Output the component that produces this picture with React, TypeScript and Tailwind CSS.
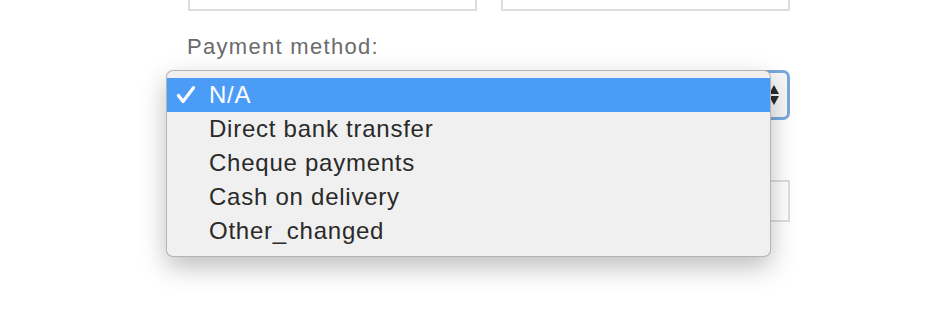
const options = ["N/A", "Direct bank transfer", "Cheque payments", "Cash on delivery", "Other_changed"];

function Check() {
  return (
    <svg width="20" height="18" viewBox="0 0 20 18" fill="none" className="block">
      <path d="M2.5 9.5 L7 15.5 L17.5 1.8" stroke="white" strokeWidth="3.2" strokeLinecap="round" strokeLinejoin="round" />
    </svg>
  );
}

export default function App() {
  const selected = "N/A";
  return (
    <div className="h-[324px] w-[934px] overflow-hidden bg-white font-['Liberation_Sans',Arial,sans-serif]">
      <div className="relative ml-[187px] w-[603px]">
        {/* inputs from the previous row, cut off by the top edge */}
        <div className="-mt-[31px] grid grid-cols-2 gap-[24px] pl-[1px]">
          <div className="h-[42px] border-2 border-[#dedede] bg-white" />
          <div className="h-[42px] border-2 border-[#dedede] bg-white" />
        </div>

        <label className="mt-[23px] block text-[22px] leading-[26px] tracking-[1.3px] text-[#6b6b6b]">
          Payment method:
        </label>

        <div className="relative mt-[10px]">
          <div className="flex h-[50px] items-center justify-end rounded-[7px] border-[3px] border-[#78a9de] bg-[#f7f7f7] pr-[8px]">
            <div className="flex flex-col items-center gap-[2px]">
              <span className="h-0 w-0 border-x-[5px] border-b-[9px] border-x-transparent border-b-[#2b2b2b]" />
              <span className="h-0 w-0 border-x-[5px] border-t-[9px] border-x-transparent border-t-[#2b2b2b]" />
            </div>
          </div>

          <ul className="absolute left-[-21px] top-0 w-[605px] rounded-[7px] border border-black/25 bg-[#f0f0f0] py-[7px] pb-[8px] shadow-[0_10px_26px_rgba(0,0,0,0.26)]">
            {options.map((o) => {
              const on = o === selected;
              return (
                <li
                  key={o}
                  className={
                    on
                      ? "flex h-[34px] items-center bg-[#4b9cf7] pl-[9px] text-white"
                      : "flex h-[34px] items-center pl-[9px] text-[#2a2a2a]"
                  }
                >
                  <span className="flex w-[33px] items-center">{on && <Check />}</span>
                  <span className="text-[24px] leading-[34px] tracking-[0.75px]">{o}</span>
                </li>
              );
            })}
          </ul>
        </div>

        <div className="mt-[60px] h-[42px] border-2 border-[#dedede] bg-white" />
      </div>
    </div>
  );
}
